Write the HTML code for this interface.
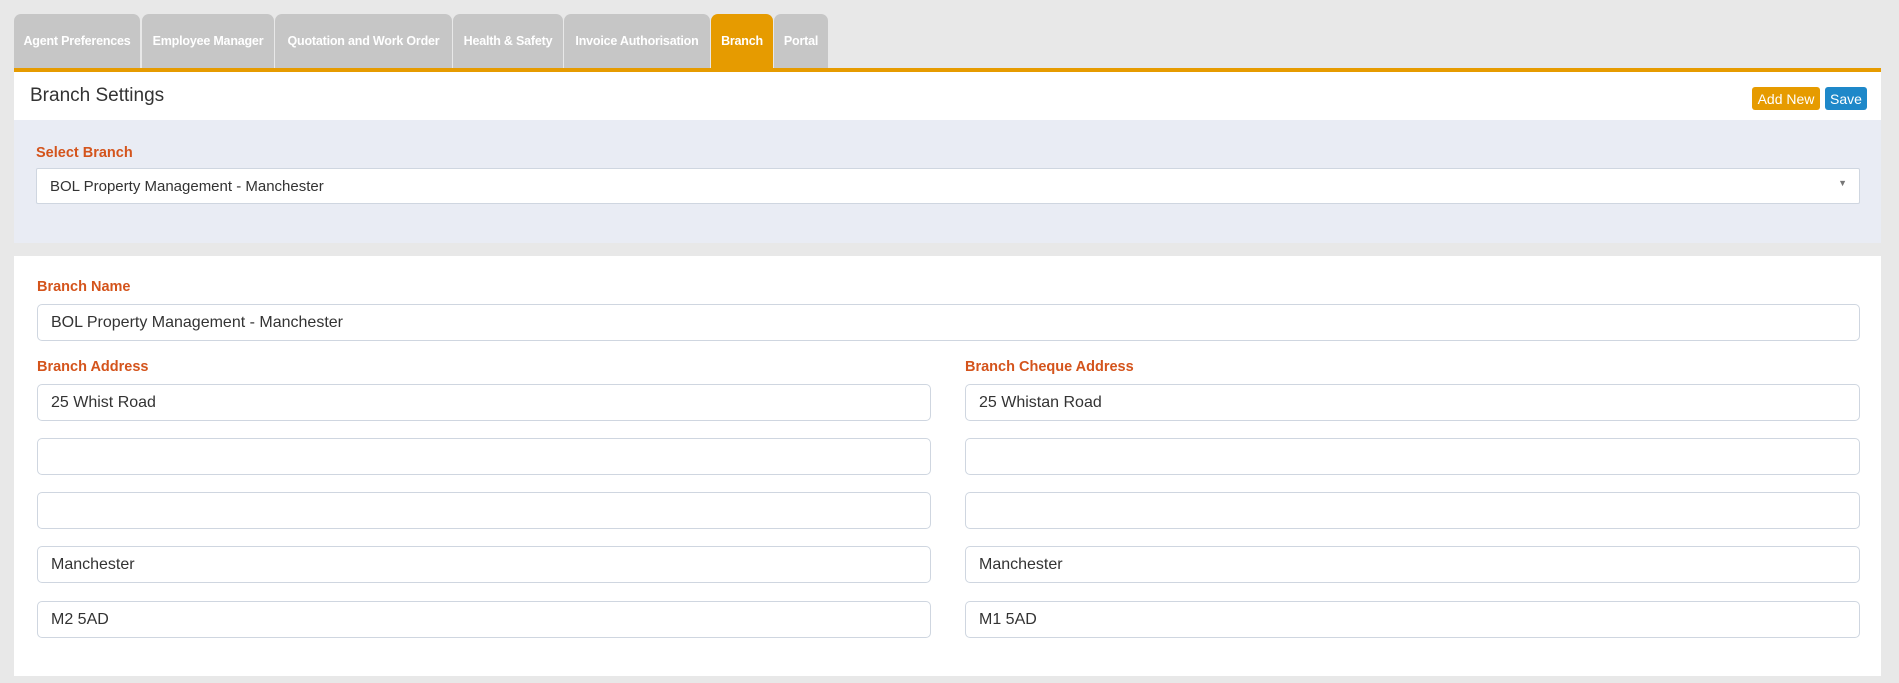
<!DOCTYPE html>
<html><head><style>
*{box-sizing:border-box;margin:0;padding:0}
body{width:1899px;height:683px;background:#e8e8e8;font-family:"Liberation Sans",sans-serif;position:relative;overflow:hidden}
.tab{position:absolute;top:14px;height:54px;background:#c6c6c6;color:#fff;font-size:12.5px;font-weight:bold;border-radius:7px 7px 0 0;display:flex;align-items:center;justify-content:center;letter-spacing:-0.2px}
.tab.a{background:#e69b00}
.line{position:absolute;left:14px;top:68px;width:1867px;height:4px;background:#e69b00}
.hdr{position:absolute;left:14px;top:72px;width:1867px;height:48px;background:#fff}
.hdr h1{position:absolute;left:16px;top:13px;font-size:19px;font-weight:normal;color:#333}
.btn{position:absolute;top:15px;height:23px;color:#fff;font-size:14px;border-radius:3px;display:flex;align-items:center;justify-content:center}
.sel{position:absolute;left:14px;top:120px;width:1867px;height:123px;background:#e9ecf4}
.main{position:absolute;left:14px;top:256px;width:1867px;height:420px;background:#fff}
.lbl{position:absolute;color:#d4541c;font-size:14.5px;font-weight:bold}
.in{position:absolute;height:37px;background:#fff;border:1px solid #cfd6e0;border-radius:5px;font-size:16px;color:#333;padding-left:13px;display:flex;align-items:center}
</style></head><body>
<div class="tab" style="left:14px;width:126px">Agent Preferences</div>
<div class="tab" style="left:142px;width:132px">Employee Manager</div>
<div class="tab" style="left:275px;width:177px">Quotation and Work Order</div>
<div class="tab" style="left:453px;width:110px">Health &amp; Safety</div>
<div class="tab" style="left:564px;width:146px">Invoice Authorisation</div>
<div class="tab a" style="left:711px;width:62px">Branch</div>
<div class="tab" style="left:774px;width:54px">Portal</div>
<div class="line"></div>
<div class="hdr"><h1>Branch Settings</h1>
<div class="btn" style="left:1738px;width:68px;background:#e69b00">Add New</div>
<div class="btn" style="left:1811px;width:42px;background:#1e88c9">Save</div>
</div>
<div class="sel">
<div class="lbl" style="left:22px;top:25px">Select Branch</div>
<div class="in" style="left:22px;top:48px;width:1824px;height:36px;border-radius:2px;font-size:15px">BOL Property Management - Manchester
<span style="position:absolute;right:12px;top:9px;font-size:9px;color:#777">▼</span></div>
</div>
<div class="main">
<div class="lbl" style="left:23px;top:23px">Branch Name</div>
<div class="in" style="left:23px;top:48px;width:1823px">BOL Property Management - Manchester</div>
<div class="lbl" style="left:23px;top:103px">Branch Address</div>
<div class="lbl" style="left:951px;top:103px">Branch Cheque Address</div>
<div class="in" style="left:23px;top:128px;width:894px">25 Whist Road</div>
<div class="in" style="left:951px;top:128px;width:895px">25 Whistan Road</div>
<div class="in" style="left:23px;top:182px;width:894px"></div>
<div class="in" style="left:951px;top:182px;width:895px"></div>
<div class="in" style="left:23px;top:236px;width:894px"></div>
<div class="in" style="left:951px;top:236px;width:895px"></div>
<div class="in" style="left:23px;top:290px;width:894px">Manchester</div>
<div class="in" style="left:951px;top:290px;width:895px">Manchester</div>
<div class="in" style="left:23px;top:345px;width:894px">M2 5AD</div>
<div class="in" style="left:951px;top:345px;width:895px">M1 5AD</div>
</div>
</body></html>
